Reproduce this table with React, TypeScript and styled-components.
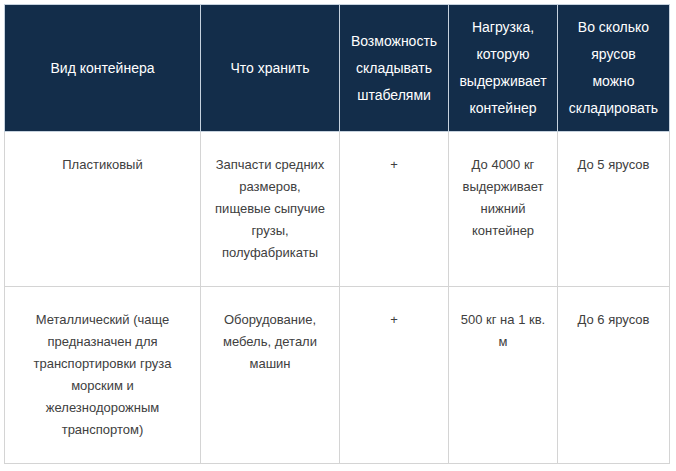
import styled, { createGlobalStyle } from "styled-components";

const GlobalStyle = createGlobalStyle`
  html, body {
    margin: 0;
    padding: 0;
    background: #ffffff;
  }
`;

const Wrapper = styled.div`
  padding: 4px;
  font-family: "Liberation Sans", Arial, sans-serif;
`;

const Table = styled.table`
  width: 665px;
  table-layout: fixed;
  border-collapse: collapse;
`;

const HeadCell = styled.th`
  background: #132d4a;
  color: #ffffff;
  font-weight: normal;
  font-size: 14px;
  line-height: 27px;
  height: 108px;
  padding: 9px 8px;
  text-align: center;
  vertical-align: middle;
  white-space: pre-line;
  border: 1px solid #c6d2de;
`;

const Cell = styled.td`
  color: #404040;
  font-size: 13px;
  line-height: 22px;
  padding: 22px 10px 22px;
  text-align: center;
  vertical-align: top;
  border: 1px solid #d4d4d4;
`;

const columns = [196, 139, 109, 109, 112];

const headers = [
  "Вид контейнера",
  "Что хранить",
  "Возможность\nскладывать\nштабелями",
  "Нагрузка,\nкоторую\nвыдерживает\nконтейнер",
  "Во сколько\nярусов\nможно\nскладировать",
];

const rows = [
  [
    "Пластиковый",
    "Запчасти средних размеров, пищевые сыпучие грузы, полуфабрикаты",
    "+",
    "До 4000 кг выдерживает нижний контейнер",
    "До 5 ярусов",
  ],
  [
    "Металлический (чаще предназначен для транспортировки груза морским и железнодорожным транспортом)",
    "Оборудование, мебель, детали машин",
    "+",
    "500 кг на 1 кв. м",
    "До 6 ярусов",
  ],
];

export default function App() {
  return (
    <>
      <GlobalStyle />
      <Wrapper>
        <Table>
          <colgroup>
            {columns.map((w, i) => (
              <col key={i} style={{ width: w }} />
            ))}
          </colgroup>
          <thead>
            <tr>
              {headers.map((h) => (
                <HeadCell key={h}>{h}</HeadCell>
              ))}
            </tr>
          </thead>
          <tbody>
            {rows.map((row, r) => (
              <tr key={r}>
                {row.map((c, i) => (
                  <Cell key={i}>{c}</Cell>
                ))}
              </tr>
            ))}
          </tbody>
        </Table>
      </Wrapper>
    </>
  );
}
